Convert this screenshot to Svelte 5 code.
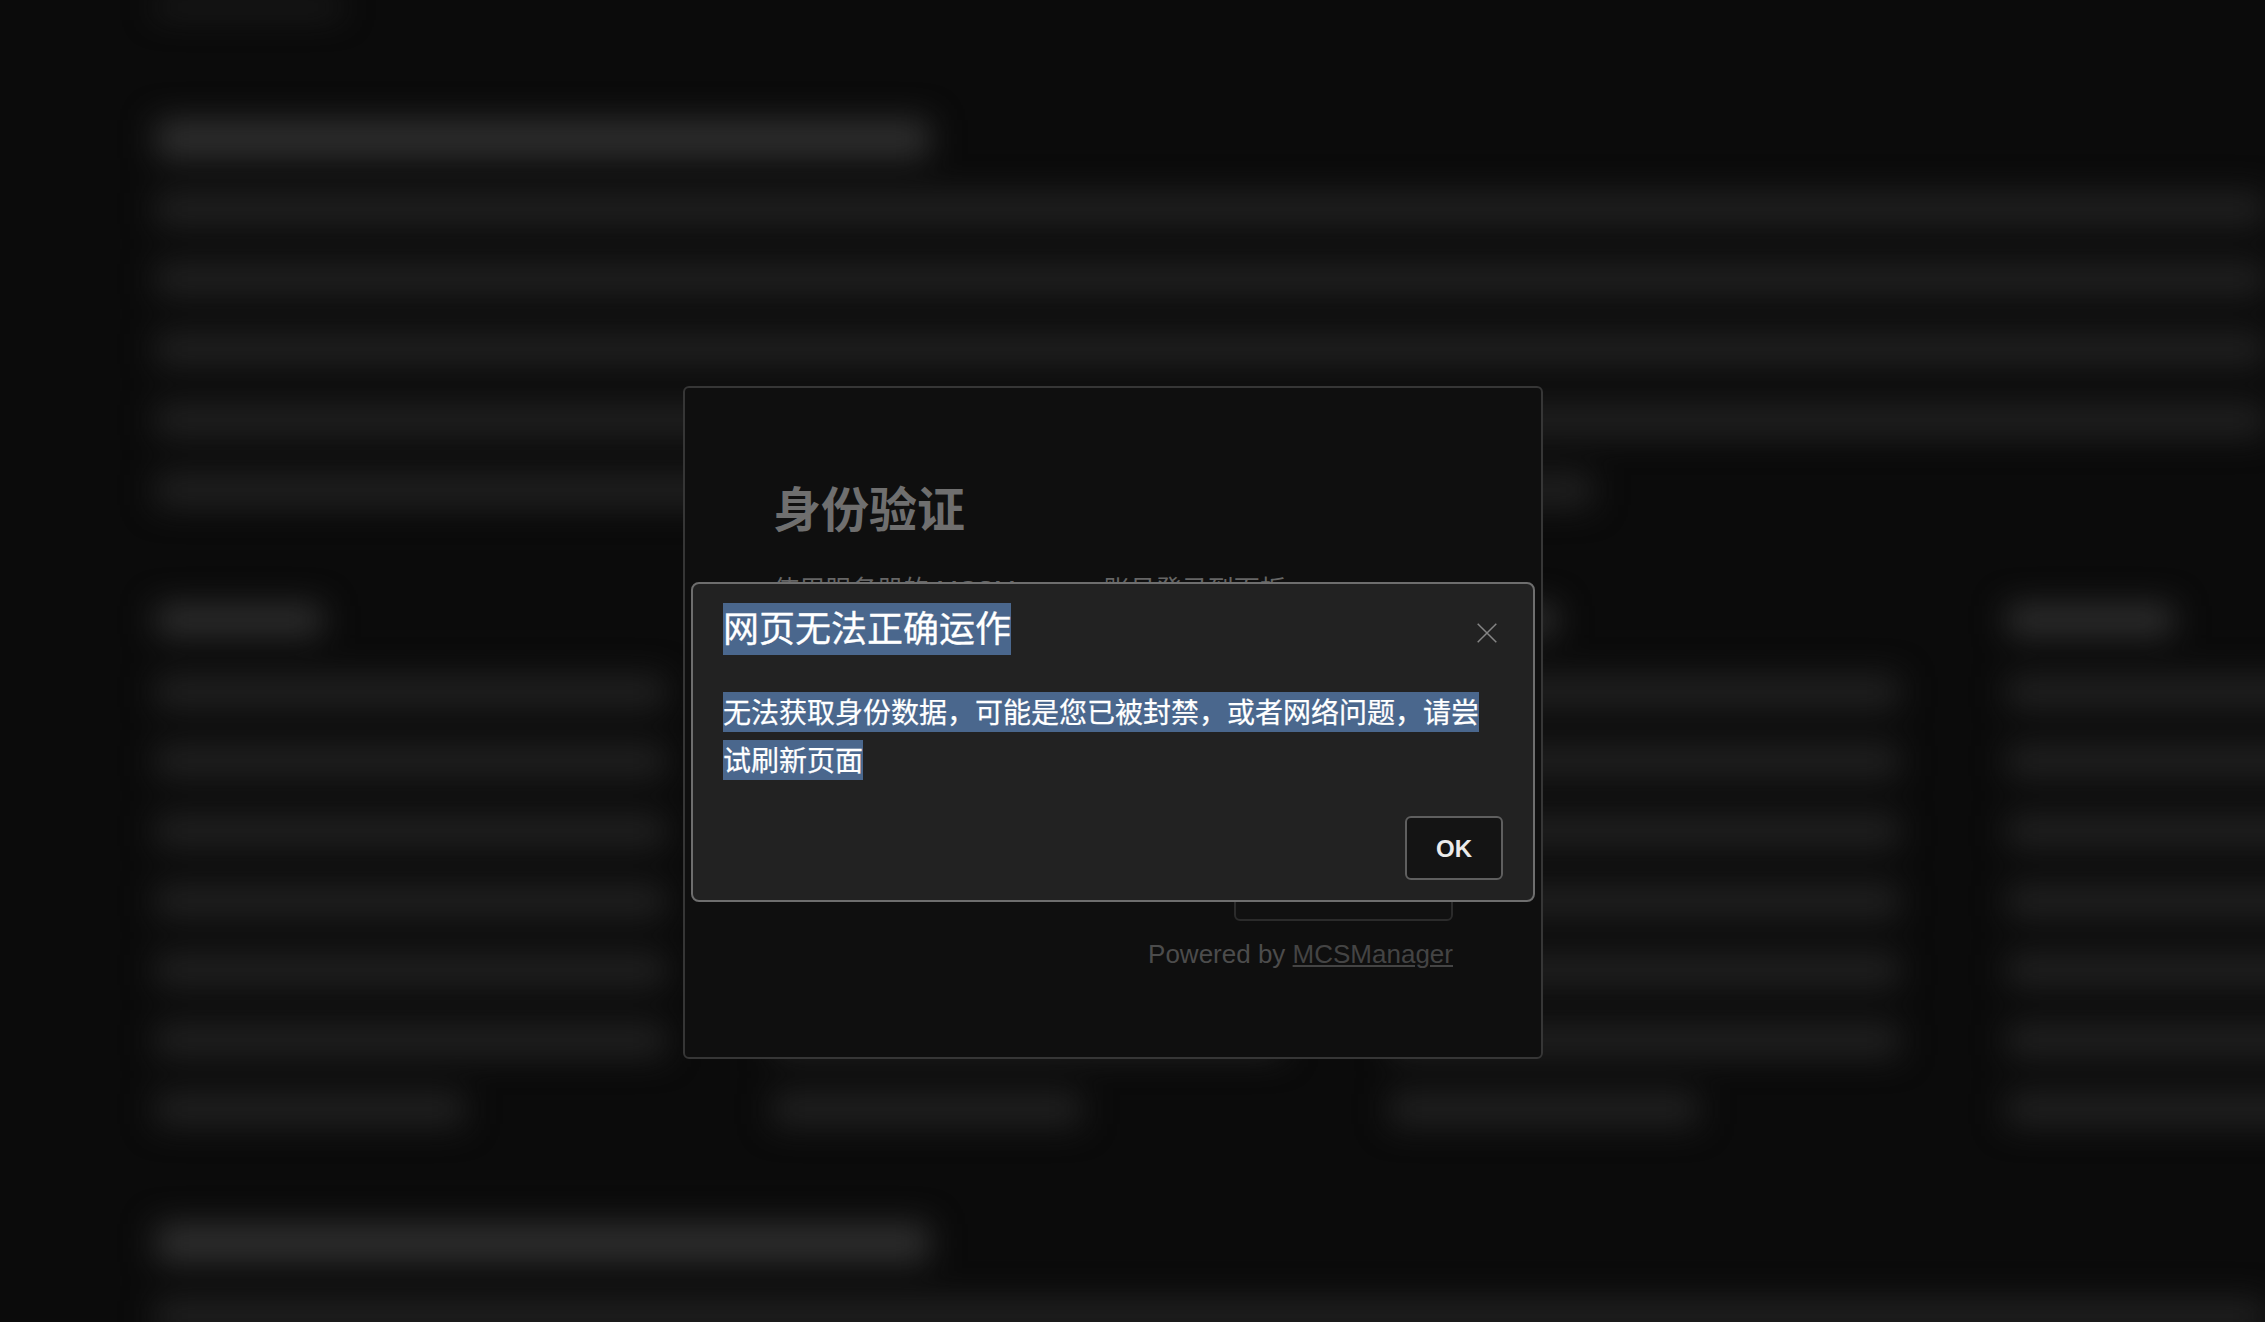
<script lang="ts">
  const topRows = [0, 0, 0, 0, 1436];
  const columns = [0, 1, 2, 3];
  const columnRows = [0, 1, 2, 3, 4, 5];
</script>

<div class="page">
  <div class="blurred" aria-hidden="true">
    <div class="bar crumb"></div>

    <div class="bar heading"></div>
    <div class="rows">
      {#each topRows as width}
        <div class="bar row" style:width={width ? `${width}px` : undefined}></div>
      {/each}
    </div>

    <div class="columns">
      {#each columns as column (column)}
        <div class="column">
          <div class="bar column-title"></div>
          <div class="column-rows">
            {#each columnRows as row (row)}
              <div class="bar row"></div>
            {/each}
            <div class="bar row short"></div>
          </div>
        </div>
      {/each}
    </div>

    <div class="bar heading second"></div>
    <div class="bar row last"></div>
  </div>

  <div class="auth-layer">
    <section class="auth-card">
      <h1>身份验证</h1>
      <p class="auth-sub">使用服务器的 MCSManager 账号登录到面板</p>
      <div class="auth-foot">
        <button class="auth-submit" type="button" aria-label="登录"></button>
        <p class="powered">Powered by <a href="#top">MCSManager</a></p>
      </div>
    </section>
  </div>

  <div class="dialog-layer">
    <div class="dialog" role="alertdialog" aria-labelledby="dialog-title">
      <header>
        <h2 id="dialog-title"><span class="picked"><span class="nudge">网页无法正确运作</span></span></h2>
        <button class="close" type="button" aria-label="Close">
          <svg viewBox="0 0 20 20" width="20" height="20" fill="none" stroke="currentColor" stroke-width="1.5">
            <path d="M0.7 0.7 19.3 19.3M19.3 0.7 0.7 19.3" />
          </svg>
        </button>
      </header>
      <p class="message"><span class="picked"><span class="nudge">无法获取身份数据，可能是您已被封禁，或者网络问题，请尝试刷新页面</span></span></p>
      <footer>
        <button class="ok" type="button">OK</button>
      </footer>
    </div>
  </div>
</div>

<style>
  :global(body) {
    margin: 0;
    background: #0b0b0b;
  }

  .page {
    position: relative;
    width: 100vw;
    height: 100vh;
    overflow: hidden;
    background: #0b0b0b;
    font-family: "Liberation Sans", "Noto Sans CJK SC", sans-serif;
  }

  .blurred {
    padding-left: 156px;
    filter: blur(16px);
  }

  .bar {
    background: #222;
  }

  .crumb {
    width: 184px;
    height: 14px;
    background: #222;
  }

  .heading {
    width: 773px;
    height: 38px;
    margin-top: 106px;
    background: #303030;
  }

  .heading.second {
    margin-top: 99px;
  }

  .rows {
    display: flex;
    flex-direction: column;
    gap: 38.2px;
    margin-top: 35px;
  }

  .row {
    height: 32px;
  }

  .columns {
    display: grid;
    grid-template-columns: repeat(4, 509px);
    column-gap: 108px;
    margin-top: 99px;
  }

  .column-title {
    width: 166px;
    height: 30px;
    background: #303030;
  }

  .column-rows {
    display: flex;
    flex-direction: column;
    gap: 37.6px;
    margin-top: 41px;
  }

  .short {
    width: 308px;
  }

  .last {
    margin-top: 38px;
  }

  .auth-layer,
  .dialog-layer {
    position: absolute;
    inset: 0;
    display: flex;
    align-items: flex-start;
  }

  .auth-layer {
    padding: 386px 0 0 683px;
  }

  .dialog-layer {
    padding: 582px 0 0 691px;
  }

  .auth-card {
    box-sizing: border-box;
    display: flex;
    flex-direction: column;
    width: 860px;
    height: 673px;
    padding: 82px 88px 0;
    border: 2px solid #363636;
    border-radius: 6px;
    background: #0f0f0f;
  }

  h1 {
    margin: 0;
    font-family: "Noto Sans CJK SC", sans-serif;
    font-size: 48px;
    line-height: 72px;
    font-weight: 700;
    color: #6f6f6f;
  }

  .auth-sub {
    margin: 28px 0 0;
    font-size: 26px;
    line-height: 40px;
    color: #666;
  }

  .auth-foot {
    display: flex;
    flex-direction: column;
    align-items: flex-end;
    margin-top: auto;
    margin-bottom: 85px;
  }

  .auth-submit {
    width: 219px;
    height: 64px;
    border: 2px solid #2b2b2b;
    border-radius: 6px;
    background: #111;
  }

  .powered {
    margin: 15px 0 0;
    font-size: 26px;
    line-height: 36px;
    color: #4c4c4c;
  }

  .powered a {
    color: #444;
  }

  .dialog {
    box-sizing: border-box;
    width: 844px;
    height: 320px;
    padding: 19px 30px;
    border: 2px solid #6e6e6e;
    border-radius: 8px;
    background: #222;
    color: #fff;
  }

  header {
    display: flex;
    justify-content: space-between;
    align-items: flex-start;
  }

  h2 {
    margin: 0;
    font-family: "Noto Sans CJK SC", sans-serif;
    font-size: 36px;
    line-height: 52px;
    font-weight: 400;
    -webkit-text-stroke: 0.3px #fff;
  }

  h2 .nudge {
    position: relative;
    top: -3px;
  }

  .picked {
    background: #4a678d;
  }

  .close {
    display: flex;
    align-items: center;
    justify-content: center;
    width: 34px;
    height: 34px;
    margin: 13px -1px 0 0;
    padding: 0;
    border: 0;
    background: none;
    color: #858585;
  }

  .message {
    margin: 33px 0 0;
    font-family: "Noto Sans CJK SC", sans-serif;
    font-size: 28px;
    line-height: 48px;
    font-weight: 400;
    -webkit-text-stroke: 0.25px #fff;
  }

  .message .nudge {
    position: relative;
    top: -1px;
  }

  footer {
    display: flex;
    justify-content: flex-end;
    margin-top: 32px;
  }

  .ok {
    width: 98px;
    height: 64px;
    padding: 1px 0 0;
    border: 2px solid #5f5f5f;
    border-radius: 6px;
    background: #141414;
    color: #ebebeb;
    font-family: "Liberation Sans", sans-serif;
    font-size: 24px;
    font-weight: 700;
  }
</style>
